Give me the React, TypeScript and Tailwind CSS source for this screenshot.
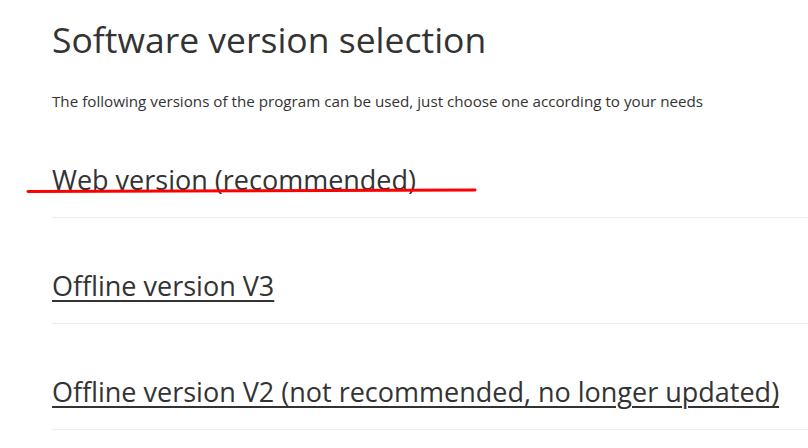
const versions = [
  { label: "Web version (recommended)", href: "#web", marked: true },
  { label: "Offline version V3", href: "#v3", marked: false },
  { label: "Offline version V2 (not recommended, no longer updated)", href: "#v2", marked: false },
]

export default function App() {
  return (
    <div className="relative min-h-[448px] w-[808px] overflow-hidden bg-white pl-[52px] text-[#333] font-['Open_Sans',sans-serif]">
      <h1 className="pt-[15px] text-[35.5px] leading-[48px] font-normal">Software version selection</h1>
      <p className="mt-[28px] text-[15.2px] leading-[20px]">
        The following versions of the program can be used, just choose one according to your needs
      </p>
      <ul className="mt-[1px]">
        {versions.map((v) => (
          <li key={v.href} className="border-b border-[#eee] pt-[51px] pb-[20px]">
            <a
              href={v.href}
              className={
                v.marked
                  ? "block text-[27px] leading-[34px] no-underline"
                  : "block text-[27px] leading-[34px] underline underline-offset-[4px] decoration-[1.5px]"
              }
            >
              {v.label}
            </a>
          </li>
        ))}
      </ul>
      {/* red hand-drawn mark under the recommended option */}
      <svg className="absolute left-0 top-0" width="808" height="448" viewBox="0 0 808 448">
        <path d="M28 191.5 Q250 190.5 475 190" stroke="#f00" strokeWidth="3" strokeLinecap="round" fill="none" />
      </svg>
    </div>
  )
}
